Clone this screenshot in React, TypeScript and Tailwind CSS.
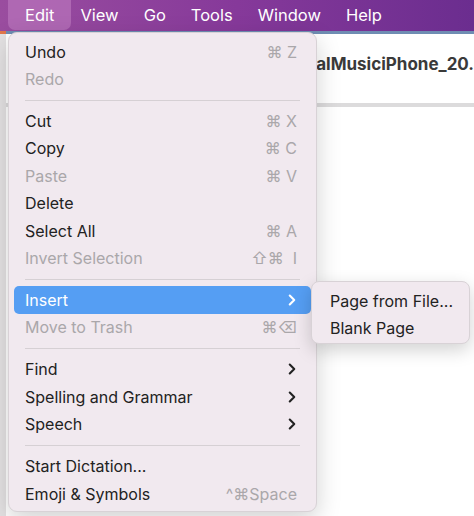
import { ChevronRight } from "lucide-react";

type Item =
  | { sep: true }
  | {
      sep?: false;
      label: string;
      key?: string;
      disabled?: boolean;
      sub?: boolean;
      active?: boolean;
    };

const items: Item[] = [
  { label: "Undo", key: "⌘ Z" },
  { label: "Redo", disabled: true },
  { sep: true },
  { label: "Cut", key: "⌘ X" },
  { label: "Copy", key: "⌘ C" },
  { label: "Paste", key: "⌘ V", disabled: true },
  { label: "Delete" },
  { label: "Select All", key: "⌘ A" },
  { label: "Invert Selection", key: "⇧⌘  I", disabled: true },
  { sep: true },
  { label: "Insert", sub: true, active: true },
  { label: "Move to Trash", key: "⌘⌫", disabled: true },
  { sep: true },
  { label: "Find", sub: true },
  { label: "Spelling and Grammar", sub: true },
  { label: "Speech", sub: true },
  { sep: true },
  { label: "Start Dictation..." },
  { label: "Emoji & Symbols", key: "^⌘Space" },
];

const font = { fontFamily: "Inter, 'Liberation Sans', sans-serif" };

export default function App() {
  return (
    <div className="relative w-[474px] h-[516px] overflow-hidden bg-white" style={font}>
      {/* menu bar */}
      <div className="h-[31px] flex items-center bg-gradient-to-r from-[#9a4d9f] via-[#86399a] to-[#6b2d8f] text-white text-[16.5px] pl-[8px]">
        <div className="h-[30px] self-start flex items-center px-[17px] rounded-b-[7px] bg-[#b771ba]/75">Edit</div>
        <div className="flex gap-[25px] ml-[9px]">
          <span>View</span>
          <span>Go</span>
          <span>Tools</span>
          <span>Window</span>
          <span>Help</span>
        </div>
      </div>

      {/* window behind */}
      <div className="flex h-[485px]">
        <div className="w-[10px] bg-[#e4e2e3] flex flex-col">
          <div className="h-[3px] bg-[#e2774a]" />
        </div>
        <div className="flex-1 flex flex-col">
          <div className="h-[3px] bg-[#6f8db3]" />
          <div className="h-[69px] bg-white flex pt-[18px] pl-[310px] font-bold text-[17px] text-[#3a3a3a]">
            alMusiciPhone_20.
          </div>
          <div className="h-[4px] bg-[#dcdbdc]" />
          <div className="flex-1 bg-white" />
        </div>
      </div>

      {/* edit menu */}
      <div className="absolute left-[8px] top-[32px] w-[309px] h-[480px] rounded-[9px] bg-[#f1e9ef] border border-[#d8d2d6] shadow-[0_8px_24px_rgba(0,0,0,0.18)] pt-[5px] px-[5px] text-[16px]">
        {items.map((it, i) =>
          it.sep ? (
            <div key={i} className="h-[14.6px] flex items-center px-[11px]">
              <div className="h-px w-full bg-[#d6d0d4]" />
            </div>
          ) : (
            <div
              key={i}
              className={`h-[27.4px] flex items-center justify-between pl-[11px] pr-[14px] rounded-[5px] ${
                it.active ? "bg-[#559ef3] text-white" : it.disabled ? "text-[#aaa7aa]" : "text-[#222]"
              }`}
            >
              <span>{it.label}</span>
              {it.key && <span className="text-[#aaa7aa] whitespace-pre">{it.key}</span>}
              {it.sub && <ChevronRight size={18} strokeWidth={2.8} className="mr-[-4px]" />}
            </div>
          )
        )}
      </div>

      {/* submenu */}
      <div className="absolute left-[311px] top-[281px] w-[159px] h-[63px] rounded-[8px] bg-[#f1e9ef] border border-[#d8d2d6] shadow-[0_6px_18px_rgba(0,0,0,0.18)] pt-[5px] px-[5px] text-[16px] text-[#222]">
        <div className="h-[27.4px] flex items-center pl-[13px]">Page from File...</div>
        <div className="h-[27.4px] flex items-center pl-[13px]">Blank Page</div>
      </div>
    </div>
  );
}
